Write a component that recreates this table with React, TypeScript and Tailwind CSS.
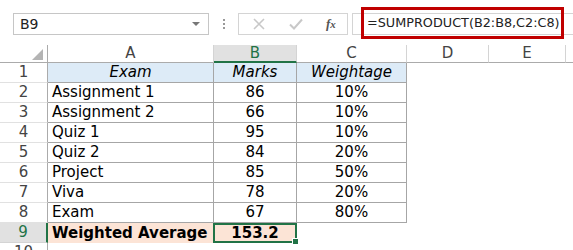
import React from "react";

const font = { fontFamily: '"DejaVu Sans", Verdana, sans-serif' };

interface Row {
  exam: string;
  marks: number;
  weight: string;
}

const rows: Row[] = [
  { exam: "Assignment 1", marks: 86, weight: "10%" },
  { exam: "Assignment 2", marks: 66, weight: "10%" },
  { exam: "Quiz 1", marks: 95, weight: "10%" },
  { exam: "Quiz 2", marks: 84, weight: "20%" },
  { exam: "Project", marks: 85, weight: "50%" },
  { exam: "Viva", marks: 78, weight: "20%" },
  { exam: "Exam", marks: 67, weight: "80%" },
];

function RowHead({ n, active }: { n: number; active?: boolean }) {
  return (
    <div
      className={
        active
          ? "h-[20px] flex items-center justify-center border-b border-r-2 border-b-[#d4d4d4] border-r-[#217346] bg-[#e1e1e1] text-[#217346]"
          : "h-[20px] flex items-center justify-center border-b border-r border-b-[#e1e1e1] border-r-[#ababab] text-[#444]"
      }
    >
      {n}
    </div>
  );
}

export default function App() {
  return (
    <div className="w-[573px] h-[250px] bg-white overflow-hidden text-[15px] text-black" style={font}>
      {/* formula bar */}
      <div className="h-[45px] flex items-start pt-[13px]">
        <div className="ml-[13px] w-[196px] h-[22px] border border-[#c6c6c6] flex items-center pl-[6px] pr-[8px] text-[14px] text-[#222]">
          <span className="flex-1">B9</span>
          <span className="w-0 h-0 border-l-[4px] border-r-[4px] border-t-[4px] border-l-transparent border-r-transparent border-t-[#777]" />
        </div>
        <div className="ml-[14px] w-[2px] h-[22px] flex flex-col items-center justify-center gap-[2px]">
          <span className="w-[2px] h-[2px] bg-[#999]" />
          <span className="w-[2px] h-[2px] bg-[#999]" />
          <span className="w-[2px] h-[2px] bg-[#999]" />
        </div>
        <div className="ml-[13px] w-[110px] h-[22px] border border-[#d4d4d4] flex items-center">
          <svg width="14" height="14" viewBox="0 0 14 14" className="ml-[13px]">
            <path d="M2 2 L12 12 M12 2 L2 12" stroke="#c8c8c8" strokeWidth="1.6" fill="none" />
          </svg>
          <svg width="16" height="14" viewBox="0 0 16 14" className="ml-[22px]">
            <path d="M2 7.5 L6 11.5 L14 2.5" stroke="#c8c8c8" strokeWidth="2" fill="none" />
          </svg>
          <span className="ml-[22px] italic font-bold text-[13px] text-[#555]" style={{ fontFamily: '"Liberation Serif", serif' }}>
            f<span className="text-[11px]">x</span>
          </span>
        </div>
        <div className="relative ml-[4px] flex-1 h-[22px] border border-r-0 border-[#d4d4d4]">
          <div className="absolute left-[8px] top-[-7px] w-[203px] h-[32px] border-[3px] border-[#c00000] flex items-center pl-[3px] text-[12.8px] text-[#222] whitespace-nowrap">
            =SUMPRODUCT(B2:B8,C2:C8)
          </div>
        </div>
      </div>

      {/* grid */}
      <div className="grid grid-cols-[48px_166px_83px_110px_82px_77px_7px]">
        {/* column headers */}
        <div className="h-[18px] border-b border-r border-[#ababab] flex items-end justify-end pr-[4px] pb-[2px]">
          <svg width="11" height="11" viewBox="0 0 11 11">
            <path d="M11 0 L11 11 L0 11 Z" fill="#b4b4b4" />
          </svg>
        </div>
        <div className="h-[18px] border-b border-r border-b-[#ababab] border-r-[#d4d4d4] flex items-center justify-center text-[#444]">A</div>
        <div className="h-[18px] border-b-2 border-r border-b-[#217346] border-r-[#d4d4d4] bg-[#e1e1e1] flex items-center justify-center text-[#217346]">B</div>
        <div className="h-[18px] border-b border-r border-b-[#ababab] border-r-[#d4d4d4] flex items-center justify-center text-[#444]">C</div>
        <div className="h-[18px] border-b border-r border-b-[#ababab] border-r-[#d4d4d4] flex items-center justify-center text-[#444]">D</div>
        <div className="h-[18px] border-b border-r border-b-[#ababab] border-r-[#d4d4d4] flex items-center justify-center text-[#444]">E</div>
        <div className="h-[18px] border-b border-b-[#ababab]" />

        {/* row 1 */}
        <RowHead n={1} />
        <div className="h-[20px] border-b border-r border-[#a6a6a6] bg-[#ddebf7] flex items-center justify-center italic">Exam</div>
        <div className="h-[20px] border-b border-r border-[#a6a6a6] bg-[#ddebf7] flex items-center justify-center italic">Marks</div>
        <div className="h-[20px] border-b border-r border-[#a6a6a6] bg-[#ddebf7] flex items-center justify-center italic">Weightage</div>
        <div className="h-[20px]" />
        <div className="h-[20px]" />
        <div className="h-[20px]" />

        {rows.map((r, i) => (
          <React.Fragment key={r.exam}>
            <RowHead n={i + 2} />
            <div className="h-[20px] border-b border-r border-[#a6a6a6] flex items-center pl-[4px]">{r.exam}</div>
            <div className="h-[20px] border-b border-r border-[#a6a6a6] flex items-center justify-center">{r.marks}</div>
            <div className="h-[20px] border-b border-r border-[#a6a6a6] flex items-center justify-center">{r.weight}</div>
            <div className="h-[20px]" />
            <div className="h-[20px]" />
            <div className="h-[20px]" />
          </React.Fragment>
        ))}

        {/* row 9 */}
        <RowHead n={9} active />
        <div className="h-[20px] bg-[#fce4d6] flex items-center pl-[4px] font-bold">Weighted Average</div>
        <div className="relative h-[20px] border-2 border-[#217346] bg-[#fce4d6] flex items-center justify-center font-bold ml-[-1px]">
          153.2
          <span className="absolute right-[-4px] bottom-[-4px] w-[5px] h-[5px] bg-[#217346] border border-white box-content" />
        </div>
        <div className="h-[20px]" />
        <div className="h-[20px]" />
        <div className="h-[20px]" />
        <div className="h-[20px]" />

        {/* row 10 */}
        <RowHead n={10} />
      </div>
    </div>
  );
}
